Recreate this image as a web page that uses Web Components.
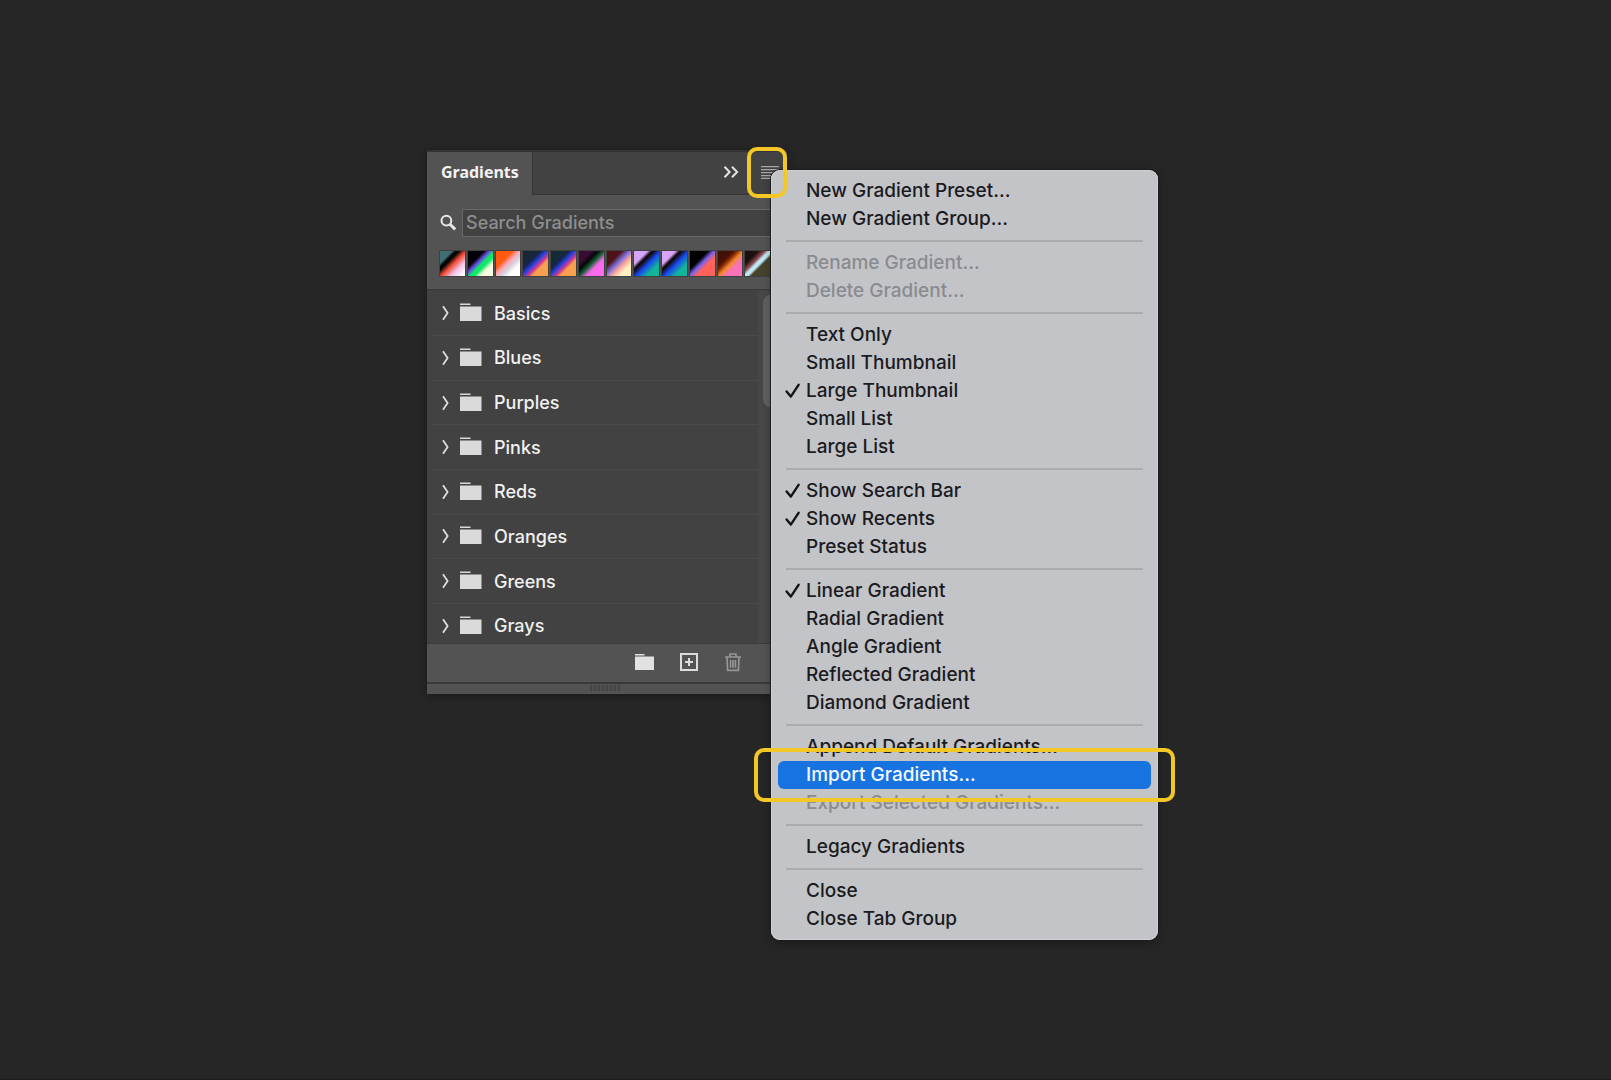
<!DOCTYPE html>
<html lang="en">
<head>
<meta charset="utf-8">
<title>Gradients panel</title>
<style>
  html, body { margin: 0; background: #262626; }
  body { font-family: Inter, "Liberation Sans", sans-serif; }
</style>
</head>
<body>
<app-stage>
  <gradients-panel slot="panel"></gradients-panel>
  <panel-menu slot="menu">
    <menu-item label="New Gradient Preset..."></menu-item>
    <menu-item label="New Gradient Group..."></menu-item>
    <menu-rule></menu-rule>
    <menu-item label="Rename Gradient..." disabled></menu-item>
    <menu-item label="Delete Gradient..." disabled></menu-item>
    <menu-rule></menu-rule>
    <menu-item label="Text Only"></menu-item>
    <menu-item label="Small Thumbnail"></menu-item>
    <menu-item label="Large Thumbnail" checked></menu-item>
    <menu-item label="Small List"></menu-item>
    <menu-item label="Large List"></menu-item>
    <menu-rule></menu-rule>
    <menu-item label="Show Search Bar" checked></menu-item>
    <menu-item label="Show Recents" checked></menu-item>
    <menu-item label="Preset Status"></menu-item>
    <menu-rule></menu-rule>
    <menu-item label="Linear Gradient" checked></menu-item>
    <menu-item label="Radial Gradient"></menu-item>
    <menu-item label="Angle Gradient"></menu-item>
    <menu-item label="Reflected Gradient"></menu-item>
    <menu-item label="Diamond Gradient"></menu-item>
    <menu-rule></menu-rule>
    <menu-item label="Append Default Gradients..."></menu-item>
    <menu-item label="Import Gradients..." selected></menu-item>
    <menu-item label="Export Selected Gradients..." disabled></menu-item>
    <menu-rule></menu-rule>
    <menu-item label="Legacy Gradients"></menu-item>
    <menu-rule></menu-rule>
    <menu-item label="Close"></menu-item>
    <menu-item label="Close Tab Group"></menu-item>
  </panel-menu>
</app-stage>

<script>
const define = (name, render) => customElements.define(name, class extends HTMLElement {
  connectedCallback() {
    if (this.shadowRoot) return;
    this.attachShadow({ mode: 'open' }).innerHTML = render(this);
  }
});

// Yellow rounded outline that calls attention to what it surrounds
define('call-out', () => `
  <style>
    :host { display: block; position: absolute; box-sizing: border-box; border: 4px solid #f3c725;
      border-radius: 10px; pointer-events: none; z-index: 5; }
  </style>`);

define('app-stage', () => `
  <style>
    :host { display: grid; min-height: 100vh; box-sizing: border-box; padding-top: 10px;
      justify-content: center; align-content: center; background: #262626; border-bottom: 1px solid #211c20; }
    main { display: grid; width: 757px; align-items: start; position: relative; }
    slot { display: block; grid-area: 1 / 1; }
    slot[name=menu] { margin: 20px 26px 0 344px; }
    call-out { left: 320px; top: -3px; width: 40px; height: 51px; }
  </style>
  <main>
    <slot name="panel"></slot>
    <slot name="menu"></slot>
    <call-out></call-out>
  </main>`);

define('menu-rule', () => `
  <style>
    :host { display: grid; height: 16px; align-items: center; padding: 0 15px; }
    hr { width: 100%; margin: 0; border: 0; height: 2px; background: #abacb0; }
  </style><hr>`);

define('menu-item', el => {
  const on = el.hasAttribute('checked'), sel = el.hasAttribute('selected');
  return `
  <style>
    :host { display: block; position: relative; padding: 0 7px; }
    button { display: flex; align-items: center; width: 100%; height: 28px; margin: 0; padding: 0 7px; border: 0;
      border-radius: 6px; background: none; color: #1b1b1f; font: inherit; font-size: 19px; font-weight: 500;
      line-height: 28px; text-align: left; white-space: nowrap; }
    button:disabled { color: #8a8b8f; }
    button.sel { background: #1673e0; color: #f3f8ff; }
    .mark { flex: 0 0 21px; height: 16px; display: flex; }
    call-out { inset: -13px -17px -13px -17px; }
  </style>
  <button type="button" role="${on ? 'menuitemcheckbox' : 'menuitem'}" ${on ? 'aria-checked="true"' : ''}
    ${el.hasAttribute('disabled') ? 'disabled' : ''} class="${sel ? 'sel' : ''}">
    <span class="mark">${on ? `<svg width="16" height="16" viewBox="0 0 16 16" fill="none" stroke="#141418"
      stroke-width="2.4" stroke-linecap="round" stroke-linejoin="round"><path d="M1.6 8.4 5.8 13.6 13.6 1.8"/></svg>` : ''}</span>
    <span>${el.getAttribute('label')}</span>
  </button>${sel ? '<call-out></call-out>' : ''}`;
});

define('panel-menu', () => `
  <style>
    :host { display: block; position: relative; padding: 7px 0; border-radius: 9px; background: #c3c4c8;
      box-shadow: inset 0 0 0 1px #d0d1d5, 0 0 0 1px #1b1b1b, 0 3px 10px rgba(0,0,0,.3); }
  </style>
  <div role="menu"><slot></slot></div>`);

define('gradient-folder', el => `
  <style>
    :host { display: grid; }
    button { display: flex; align-items: center; margin: 0 0 0 4px; padding: 0 0 0 10px; border: 0;
      border-bottom: 1px solid #4a4a4a; background: none; color: #f1f1f1; font: inherit; font-size: 18px;
      font-weight: 500; text-align: left; }
    .chev { flex: 0 0 18px; } .folder { flex: 0 0 23px; margin-right: 12px; }
    svg { display: block; }
  </style>
  <button type="button" aria-expanded="false">
    <span class="chev"><svg width="9" height="16" viewBox="0 0 9 16" fill="none" stroke="#dedede" stroke-width="1.8"><path d="M2 1.2 6.6 8 2 14.8"/></svg></span>
    <span class="folder"><svg width="23" height="20" viewBox="0 0 23 20" fill="#dadada"><path d="M1 .6H11.5V2H1ZM1 3.4H22.5V18H1Z"/></svg></span>
    <span>${el.getAttribute('label')}</span>
  </button>`);

const swatches = [
  ['Teal to white', '#3f6e73 0 24%, #050505 32% 38%, #f04a30 52%, #f3c4e8 72%, #fff 95%'],
  ['Black, green, cream', '#02020a 0 32%, #6b4be8 43%, #10e868 54% 62%, #f4ffe0 74%'],
  ['Orange to white', '#ff5a10 0 34%, #f9a9b8 48%, #d8d4dc 62%, #fff 76%'],
  ['Navy, blue, amber', '#172733 0 26%, #18234f 36%, #2a43e0 48%, #d93a8c 60%, #f7a04e 68%'],
  ['Night, blue, amber', '#142b33 0 26%, #18234f 36%, #2a43e0 48%, #d93a8c 60%, #f7a04e 68%'],
  ['Plum, green, pink', '#3a0c35 0 24%, #060808 38%, #145c30 50%, #ea6be0 64%, #ff6bf0 76%'],
  ['Maroon to cream', '#4c1419 0 30%, #8173e0 47%, #f9a39a 60%, #fff0c4 76%'],
  ['Lilac, blue, green', '#d8a4fa 0 27%, #120c14 36% 40%, #1746ee 54%, #12b59a 76%'],
  ['Lilac, blue, teal', '#d8a4fa 0 27%, #120c14 36% 40%, #1746ee 54%, #12b59a 76%'],
  ['Black, violet, coral', '#020104 0 36%, #7c63f0 49%, #ff625a 62%'],
  ['Brown, orange, pink', '#451006 0 30%, #8d2a08 40%, #f08a28 52%, #fa72b8 66%'],
  ['Dark, ice, olive', '#1c100e 0 26%, #8d4a50 40%, #bfe6f2 48% 55%, #45432c 62%'],
];

define('recent-swatches', () => `
  <style>
    :host { display: flex; gap: 3px; height: 25px; padding: 0 17px 0 13px; }
    button { flex: 1; padding: 0; border: 0; box-shadow: 0 0 0 1px #404040; }
  </style>
  ${swatches.map(([n, g]) => `<button type="button" aria-label="${n}" style="background:linear-gradient(135deg, ${g})"></button>`).join('')}`);

define('gradients-panel', () => `
  <style>
    :host { display: flex; flex-direction: column; width: 360px; box-sizing: border-box; background: #535353;
      border-top: 2px solid #333; box-shadow: 0 0 0 1px #1f1f1f, 0 2px 8px rgba(0,0,0,.35); }
    button { padding: 0; border: 0; background: none; display: grid; }
    svg { display: block; }
    header { display: flex; height: 43px; background: #424242; }
    h2 { margin: 0; width: 106px; box-sizing: border-box; padding-left: 14px; font: 700 16px/40px "Noto Sans", sans-serif;
      color: #f2f2f2; background: #535353; border-right: 1px solid #333; }
    .tools { flex: 1; display: flex; justify-content: flex-end; align-items: center; gap: 22px; padding: 0 8px 2px 0;
      border-bottom: 1px solid #363636; }
    .search { display: flex; align-items: center; margin: 14px 0 14px 13px; gap: 5px; height: 28px; }
    input { flex: 1; min-width: 0; height: 28px; box-sizing: border-box; padding: 0 3px; border: 1px solid #686868;
      background: #424242; font: inherit; font-size: 18px; font-weight: 500; color: #eee; outline: 0; border-radius: 0; }
    input::placeholder { color: #8e8e8e; opacity: 1; }
    label { width: 17px; }
    .list { position: relative; height: 354px; margin-top: 13px; overflow: hidden; background: #424242;
      border-top: 1px solid #383838; display: flex; box-sizing: border-box; }
    .rows { flex: 1; display: grid; grid-template-rows: repeat(8, 1fr); height: 357px; padding-top: 2px; }
    .track { width: 29px; box-sizing: border-box; background: #474747; padding: 4px 0 0 5px; }
    .thumb { width: 18px; height: 114px; border-radius: 9px; background: #606060; }
    footer { display: flex; height: 39px; box-sizing: border-box; border-top: 1px solid #3c3c3c; align-items: center;
      justify-content: flex-end; gap: 24px; padding-right: 44px; padding-bottom: 1px; }
    .grip { height: 12px; box-sizing: border-box; border-top: 2px solid #393939; display: flex; justify-content: center; padding-top: 1px; }
    .grip i { width: 31px; height: 6px; margin-right: 4px; background: repeating-linear-gradient(90deg, #444 0 2px, #505050 2px 4px); }
  </style>
  <header>
    <h2>Gradients</h2>
    <div class="tools">
      <button type="button" aria-label="Collapse panel"><svg width="16" height="14" viewBox="0 0 16 14" fill="none" stroke="#e4e4e4" stroke-width="2"><path d="M1.5 1.8 6.6 7 1.5 12.2M9 1.8 14.1 7 9 12.2"/></svg></button>
      <button type="button" aria-label="Panel menu"><svg width="18" height="14" viewBox="0 0 18 14" fill="#a8a8a8"><path d="M0 1h18v1.3H0zM0 4h18v1.3H0zM0 7h18v1.3H0zM0 10h18v1.3H0zM0 12.7h18V14H0z"/></svg></button>
    </div>
  </header>
  <div class="search">
    <label for="q" aria-label="Search"><svg width="17" height="17" viewBox="0 0 17 17" fill="none" stroke="#e8e8e8"><circle cx="6.4" cy="6.6" r="4.9" stroke-width="2"/><path d="M10 10.2 15.2 15.4" stroke-width="3"/></svg></label>
    <input id="q" type="text" placeholder="Search Gradients">
  </div>
  <recent-swatches></recent-swatches>
  <div class="list">
    <div class="rows">
      ${['Basics','Blues','Purples','Pinks','Reds','Oranges','Greens','Grays'].map(n => `<gradient-folder label="${n}"></gradient-folder>`).join('')}
    </div>
    <div class="track"><div class="thumb"></div></div>
  </div>
  <footer>
    <button type="button" aria-label="New group"><svg width="21" height="18" viewBox="0 0 21 18" fill="#e2e2e2"><path d="M1 1H10.5V2.6H1ZM1 3.6H20V17H1Z"/></svg></button>
    <button type="button" aria-label="New gradient"><svg width="20" height="20" viewBox="0 0 20 20" fill="none" stroke="#dcdcdc" stroke-width="2"><path d="M2 2H18V18H2ZM10 6V14M6 10H14"/></svg></button>
    <button type="button" aria-label="Delete"><svg width="20" height="20" viewBox="0 0 20 20" fill="none" stroke="#979797" stroke-width="1.6"><path d="M2 5H18M7 4.6V2H13V4.6M4 5.4 4.6 18.4H15.4L16 5.4M7.6 8V15.8M10 8V15.8M12.4 8V15.8"/></svg></button>
  </footer>
  <div class="grip"><i></i></div>`);
</script>
</body>
</html>
